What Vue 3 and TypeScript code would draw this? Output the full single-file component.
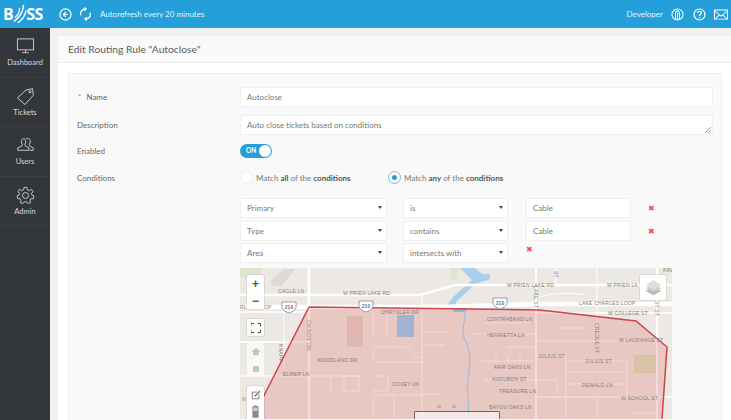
<script setup lang="ts">
type NavItem = { label: string; icon: string }
type Rule = { field: string; op: string; value?: string }
type MapLabel = { text: string; x: number; y: number; turn?: number }

const nav: NavItem[] = [
  { label: 'Dashboard', icon: 'monitor' },
  { label: 'Tickets', icon: 'tag' },
  { label: 'Users', icon: 'users' },
  { label: 'Admin', icon: 'gear' },
]

const rules: Rule[] = [
  { field: 'Primary', op: 'is', value: 'Cable' },
  { field: 'Type', op: 'contains', value: 'Cable' },
  { field: 'Area', op: 'intersects with' },
]

// streets drawn under the area polygon, [path, width]
const roads: [string, number][] = [
  ['M0 27H180L215 17H432', 2.5],
  ['M0 39H200L296 36H432', 4.5],
  ['M0 44H69', 1.5],
  ['M296 30Q320 22 345 27', 1],
  ['M296 45H432', 1.5],
  ['M69 0V151', 2.5],
  ['M296 0V151', 2],
  ['M357 0V70', 1],
  ['M417 0V151', 2],
  ['M316 0V17', 1],
  ['M44 45V100', 1],
  ['M0 74H69', 1.5],
  ['M133 45V68', 1],
  ['M147 45V68', 1],
  ['M182 25V151', 1],
  ['M182 64H207', 1],
  ['M182 77H205', 1],
  ['M0 108H125', 1],
  ['M104 108H119V123H104Z', 1],
  ['M91 108V125', 1],
  ['M133 108H148V123H133', 1],
  ['M182 126H200', 1],
  ['M137 79H165Q170 79 173 85Q176 90 182 90H182M137 79Q133 79 133 84V90Q133 94 140 94H182', 1],
  ['M133 150V135Q133 127 142 127H182', 1],
  ['M154 127V151', 1],
  ['M233 66H296', 1],
  ['M267 79H296', 1],
  ['M297 73H417', 1],
  ['M297 88H326', 1],
  ['M326 93H387', 1],
  ['M326 104H387', 1],
  ['M326 116H387', 1],
  ['M296 129H432', 1.5],
  ['M326 88V151', 1],
  ['M357 129V151', 1],
  ['M387 93V129', 1],
  ['M238 93H296', 1],
  ['M256 87V95', 1],
  ['M268 87V95', 1],
  ['M280 87V95', 1],
  ['M243 112H317V125', 1],
  ['M391 145H417', 1],
  ['M245 55H290', 1],
  ['M320 60H345', 1],
]

const labels: MapLabel[] = [
  { text: 'CAGLE LN', x: 38, y: 25 },
  { text: 'W PRIEN LAKE RD', x: 103, y: 27 },
  { text: 'RL', x: 0, y: 41 },
  { text: 'OP', x: 24, y: 41 },
  { text: 'N', x: 2, y: 133 },
  { text: 'CHRYSLER DR', x: 141, y: 46 },
  { text: 'WOODLAND DR', x: 77, y: 94 },
  { text: 'ELMER LN', x: 43, y: 108 },
  { text: 'COVEY LN', x: 152, y: 118 },
  { text: 'W PRIEN LAKE RD', x: 267, y: 19 },
  { text: 'W PRIEN LA', x: 367, y: 19 },
  { text: 'KRL', x: 423, y: 4 },
  { text: 'LAKE CHARLES LOOP', x: 339, y: 37 },
  { text: 'W COLLEGE ST', x: 368, y: 47 },
  { text: 'CONTRABAND LN', x: 247, y: 53 },
  { text: 'HENRIETTA LN', x: 247, y: 69 },
  { text: 'W LAGRANGE ST', x: 379, y: 74 },
  { text: 'JULIUS ST', x: 298, y: 90 },
  { text: 'JULIUS ST', x: 345, y: 95 },
  { text: 'FAIR OAKS LN', x: 254, y: 101 },
  { text: 'AUDUBON ST', x: 252, y: 113 },
  { text: 'DEWALD LN', x: 342, y: 119 },
  { text: 'TREASURE LN', x: 259, y: 125 },
  { text: 'W SCHOOL ST', x: 381, y: 132 },
  { text: 'BAYOU OAKS LN', x: 249, y: 141 },
  { text: 'NELSON RD', x: 71, y: 83, turn: -90 },
  { text: 'KNAPP', x: 39, y: 76, turn: 90 },
  { text: 'LAKE ST', x: 294, y: 18, turn: 90 },
  { text: 'CREOLE ST', x: 355, y: 55, turn: 90 },
  { text: 'ST ST', x: 415, y: 33, turn: 90 },
  { text: 'ST', x: 314, y: 3, turn: 90 },
  { text: 'S', x: 197, y: 137, turn: 90 },
  { text: 'S', x: 212, y: 137, turn: 90 },
]

const shields = [
  { x: 42, y: 34 },
  { x: 119, y: 33 },
  { x: 253, y: 30 },
]
</script>

<template>
  <div class="app">
    <header class="topbar">
      <div class="logo">
        <span>B</span>
        <svg class="logo-mark" viewBox="0 0 14 20" width="14" height="20" fill="none" stroke="#fff" stroke-linecap="round">
          <path d="M10.500 1.500C10 8 7 13 1.500 17" stroke-width="1.600" />
          <path d="M6.500 4.500C6.500 8 5 11 2.500 13" stroke-width="1.300" />
          <path d="M13 7C12 12 9 16 5 18.500" stroke-width="1.300" />
        </svg>
        <span>SS</span>
      </div>
      <svg class="bar-icon back" viewBox="0 0 14 14" width="13" height="13" fill="none" stroke="#fff" stroke-width="1.300">
        <circle cx="7" cy="7" r="6" />
        <path d="M7.500 4.200 4.700 7l2.800 2.800M5 7h4.600" />
      </svg>
      <svg class="bar-icon" viewBox="0 0 14 14" width="13" height="14" fill="none" stroke="#fff" stroke-width="1.400">
        <path d="M2 8.500A5.300 5.300 0 0 1 3.400 2.900 5 5 0 0 1 7 1.600" />
        <path d="M5.600 0 7.600 1.600 5.600 3.400" />
        <path d="M12 5.500A5.300 5.300 0 0 1 10.600 11.100 5 5 0 0 1 7 12.400" />
        <path d="M8.400 14 6.400 12.400 8.400 10.600" />
      </svg>
      <span class="refresh">Autorefresh every 20 minutes</span>
      <span class="spacer"></span>
      <span class="dev">Developer</span>
      <svg class="bar-icon user" viewBox="0 0 14 14" width="13" height="13" fill="none" stroke="#fff" stroke-width="1.100">
        <circle cx="7" cy="7" r="6" />
        <path d="M4.800 12.400V6.500C4.800 4 5.800 2.900 7 2.900S9.200 4 9.200 6.500V12.400M7 5V13" />
      </svg>
      <svg class="bar-icon help" viewBox="0 0 14 14" width="13" height="13" fill="none" stroke="#fff" stroke-width="1.300">
        <circle cx="7" cy="7" r="5.900" />
        <path d="M5 5.500C5 4.200 5.900 3.600 7 3.600S9 4.300 9 5.400C9 7 7 6.900 7 8.600M7 9.700V11" />
      </svg>
      <svg class="bar-icon mail" viewBox="0 0 14 11" width="14" height="11">
        <path fill="#fff" d="M0 .5H14V10.500H0ZM1 1.500 7 6.500 13 1.500ZM1 2.700V9.300L4.800 5.800ZM13 2.700 9.200 5.800 13 9.300ZM5.600 6.500 1.500 9.700H12.500L8.400 6.500 7 7.800Z" fill-rule="evenodd" />
      </svg>
    </header>

    <div class="main">
      <aside class="sidebar">
        <div v-for="item in nav" :key="item.label" class="nav-item">
          <svg v-if="item.icon === 'monitor'" viewBox="0 0 20 20" width="19" height="19" fill="none" stroke="#c9cbcd" stroke-width="1">
            <rect x="1.500" y="2" width="17" height="11.500" />
            <path d="M10 13.500V16M6.500 16.500H13.500" />
          </svg>
          <svg v-else-if="item.icon === 'tag'" viewBox="0 0 20 20" width="19" height="19" fill="none" stroke="#c9cbcd" stroke-width="1">
            <path d="M1.500 11.500 10.500 3.200 17.500 1.800 18.200 8.800 9.500 18.500Z" stroke-linejoin="round" />
            <circle cx="14.700" cy="5" r="1.200" />
          </svg>
          <svg v-else-if="item.icon === 'users'" viewBox="0 0 20 20" width="19" height="19" fill="none" stroke="#c9cbcd" stroke-width="1">
            <path d="M6.500 8.700C5 6.300 5.500 2.800 8 2.800S11 6.300 9.500 8.700V10.300L13.700 12.500V15H1.800V12.500L6.500 10.300Z" />
            <path d="M10.500 3C11.200 2.300 14.800 2 15 5.200 15.100 6.700 14.600 7.800 14 8.700V10.300L18.200 12.500V15H14.500" />
          </svg>
          <svg v-else viewBox="0 0 20 20" width="19" height="19" fill="none" stroke="#c9cbcd" stroke-width="1">
            <circle cx="10" cy="10" r="3.200" />
            <path d="M8.500 1.500H11.500L12 4 14.200 4.900 16.300 3.500 18 6 16.300 7.700 16.700 9.500 18.800 10.500 18 13.500 15.800 13.300 14.600 15.200 15.500 17.300 12.800 18.500 11.400 16.700H8.600L7.200 18.500 4.500 17.300 5.400 15.200 4.200 13.300 2 13.500 1.200 10.500 3.300 9.500 3.700 7.700 2 6 3.700 3.500 5.800 4.900 8 4Z" stroke-linejoin="round" />
          </svg>
          <span>{{ item.label }}</span>
        </div>
      </aside>

      <main class="content">
        <section class="panel">
          <h1 class="panel-head">Edit Routing Rule "Autoclose"</h1>
          <div class="panel-body">
            <form class="form" @submit.prevent>
              <div class="row">
                <label><i>*</i>Name</label>
                <div class="control"><div class="field">Autoclose</div></div>
              </div>
              <div class="row">
                <label>Description</label>
                <div class="control">
                  <div class="field">
                    Auto close tickets based on conditions
                    <svg class="grip" viewBox="0 0 6 6" width="6" height="6" fill="none" stroke="#888" stroke-width=".8"><path d="M0 6 6 0M3 6 6 3" /></svg>
                  </div>
                </div>
              </div>
              <div class="row enabled">
                <label>Enabled</label>
                <div class="control">
                  <div class="toggle"><span>ON</span><b></b></div>
                </div>
              </div>
              <div class="row match">
                <label>Conditions</label>
                <div class="control radios">
                  <div class="radio">
                    <span class="dot"></span>
                    <span>Match <b>all</b> of the <b>conditions</b></span>
                  </div>
                  <div class="radio on">
                    <span class="dot"></span>
                    <span>Match <b>any</b> of the <b>conditions</b></span>
                  </div>
                </div>
              </div>

              <div class="rules">
                <div v-for="rule in rules" :key="rule.field" class="rule">
                  <div class="field select first">{{ rule.field }}</div>
                  <div class="field select second">{{ rule.op }}</div>
                  <template v-if="rule.value">
                    <div class="field third">{{ rule.value }}</div>
                    <span class="remove">✖</span>
                  </template>
                  <span v-else class="remove inline">✖</span>
                </div>
              </div>

              <div class="map">
                <svg class="map-art" viewBox="0 0 432 151" width="432" height="151">
                  <rect width="432" height="151" fill="#ece9e4" />
                  <path d="M0 0H22V6L16 9H0Z" fill="#dfe6cf" />
                  <path d="M210 0H220L216 12H210Z" fill="#dfe6cf" />
                  <path d="M30 14 44 1H55L42 18H34Z" fill="#dedad3" />
                  <path d="M220 0H235L242 6H250V11L235 16 216 34V39H206L214 28 232 12Z" fill="#a9d0ea" />
                  <path v-for="road in roads" :key="road[0]" :d="road[0]" fill="none" stroke="#fff" :stroke-width="road[1]" />
                  <path d="M69 39 300 42 396 53 427 79 422 151H12Z" fill="#d9615e" fill-opacity=".24" />
                  <rect x="107" y="48" width="16" height="31" fill="#cf8f85" fill-opacity=".3" />
                  <rect x="157" y="47" width="17" height="22" fill="#a3b4d3" />
                  <rect x="394" y="87" width="22" height="18" fill="#d9c3a6" />
                  <path d="M213 42H226" stroke="#9db1d0" stroke-width="4" />
                  <path d="M224 42C228 50 220 58 224 70 232 84 230 96 228 110 226 124 230 138 228 151" fill="none" stroke="#a8bcd8" stroke-width="1.300" />
                  <path d="M69 39 300 42 396 53 427 79 422 151M69 39 12 151" fill="none" stroke="#cf434c" stroke-width="1.500" />
                  <g v-for="shield in shields" :key="shield.x">
                    <path :d="`M${shield.x} ${shield.y}h14v6q-2 4-7 5-5-1-7-5Z`" fill="#fff" stroke="#7a88a4" stroke-width=".8" />
                    <text :x="shield.x + 7" :y="shield.y + 7" text-anchor="middle" class="shield">210</text>
                  </g>
                  <text
                    v-for="label in labels"
                    :key="label.text + label.x"
                    :x="label.x"
                    :y="label.y"
                    class="map-label"
                    :transform="label.turn ? `rotate(${label.turn} ${label.x} ${label.y})` : undefined"
                  >{{ label.text }}</text>
                </svg>
                <div class="tools">
                  <div class="tool-group">
                    <button type="button" class="tool glyph">+</button>
                    <button type="button" class="tool glyph">−</button>
                  </div>
                  <div class="tool-group full">
                    <button type="button" class="tool">
                      <svg viewBox="0 0 12 12" width="10" height="10" fill="none" stroke="#555" stroke-width="1.200"><path d="M0 4V.6H4M8 .6H11.400V4M0 8V11.400H4M8 11.400H11.400V8" /></svg>
                    </button>
                  </div>
                  <div class="tool-group muted">
                    <button type="button" class="tool">
                      <svg viewBox="0 0 10 10" width="8" height="8" fill="#c4c4c4"><path d="M5 0 9.500 3.200 8 9H2L.5 3.200Z" /></svg>
                    </button>
                    <button type="button" class="tool">
                      <svg viewBox="0 0 10 10" width="6" height="6" fill="#c4c4c4"><rect width="10" height="10" /></svg>
                    </button>
                  </div>
                  <div class="tool-group draw">
                    <button type="button" class="tool">
                      <svg viewBox="0 0 12 12" width="10" height="10" fill="none" stroke="#666" stroke-width="1"><path d="M7 2.500H1.500V10.500H9.500V5.500" /><path d="M4.500 7.500 10.500 1.500" stroke-width="1.500" /></svg>
                    </button>
                    <button type="button" class="tool">
                      <svg viewBox="0 0 8 14" width="7" height="13"><path d="M2.500 0H5.500V1H7.500V14H.5V1H2.500Z" fill="#888" /><rect x="1.500" y="2.500" width="5" height="4" fill="#ccc" /></svg>
                    </button>
                  </div>
                </div>
                <button type="button" class="layers">
                  <svg viewBox="0 0 20 20" width="17" height="17">
                    <path d="M10 9 19 14 10 19 1 14Z" fill="#b8b8b8" />
                    <path d="M10 6 19 11 10 16 1 11Z" fill="#cccccc" />
                    <path d="M10 1 19 7 10 13 1 7Z" fill="#dedede" />
                  </svg>
                </button>
                <div class="map-popup"></div>
              </div>
            </form>
          </div>
        </section>
      </main>
    </div>
  </div>
</template>

<style>
html, body { margin: 0; overflow: hidden; background: #f0f1f2; }
</style>

<style scoped>
.app {
  width: 731px;
  height: 420px;
  overflow: hidden;
  font-family: Lato, "Liberation Sans", sans-serif;
  color: #666;
  font-size: 8px;
  display: flex;
  flex-direction: column;
}
.topbar {
  height: 28px;
  flex: none;
  background: #249fda;
  display: flex;
  align-items: center;
  padding: 0 3px 0 3px;
  color: #e6f4fb;
}
.logo {
  width: 56px;
  display: flex;
  align-items: center;
  color: #fff;
  font-weight: 700;
  font-size: 16px;
  letter-spacing: -.5px;
  font-family: "Open Sans", "Liberation Sans", sans-serif;
}
.logo-mark { margin: 0 -1px 0 0; }
.bar-icon { flex: none; margin-left: 7px; }
.bar-icon.back { margin-left: 0; }
.refresh { margin-left: 8px; font-size: 8px; }
.spacer { flex: 1; }
.user { margin-left: 8px; }
.help { margin-left: 9px; }
.mail { margin-left: 8px; }
.main { flex: 1; display: flex; min-height: 0; }
.sidebar {
  width: 50px;
  flex: none;
  background: #33373c;
}
.nav-item {
  height: 49.500px;
  box-sizing: border-box;
  padding-top: 9px;
  display: flex;
  flex-direction: column;
  align-items: center;
  border-bottom: 1px solid #3b3f44;
  color: #d8dadc;
  font-size: 7.500px;
  gap: 2px;
}
.content { flex: 1; padding: 7px 0 0 8px; min-width: 0; }
.panel { background: #fff; height: 100%; border-top: 1px solid #ececec; }
.panel-head {
  margin: 0;
  height: 27px;
  box-sizing: border-box;
  padding: 7px 0 0 10px;
  background: #fafafa;
  border-bottom: 1px solid #ececec;
  font-size: 10.300px;
  font-weight: 400;
  color: #5c5c5c;
  line-height: 13px;
}
.panel-body { padding: 10px 9px 0 10px; }
.form {
  background: #f9f9f9;
  border: 1px solid #f0f0f0;
  padding: 13px 8px 0 8px;
  height: 360px;
  box-sizing: border-box;
}
.row { display: flex; margin-bottom: 8px; align-items: center; }
label {
  width: 163px;
  flex: none;
  font-size: 8px;
  color: #666;
}
label i { color: #e66; font-style: normal; margin-right: 5px; margin-left: 1px; }
.control { flex: 1; min-width: 0; }
.field {
  position: relative;
  box-sizing: border-box;
  height: 20px;
  line-height: 18px;
  background: #fff;
  border: 1px solid #f0f0f0;
  padding: 0 6px;
  font-size: 8px;
  color: #777;
}
.grip { position: absolute; right: 1px; bottom: 1px; }
.enabled { margin: 9px 0 0; }
.toggle {
  position: relative;
  width: 32px;
  height: 14px;
  border-radius: 7px;
  background: #249fda;
  color: #fff;
  font-size: 6.500px;
  font-weight: 700;
  line-height: 14px;
  padding-left: 6px;
  box-sizing: border-box;
}
.toggle b {
  position: absolute;
  right: 1px;
  top: 1px;
  width: 12px;
  height: 12px;
  border-radius: 50%;
  background: #fff;
}
.match { margin: 13px 0 0; }
.radios { display: flex; }
.radio { display: flex; align-items: center; gap: 3px; color: #777; font-size: 8px; width: 148px; }
.radio b { color: #555; font-weight: 700; }
.dot {
  width: 13px;
  height: 13px;
  box-sizing: border-box;
  border: 1px solid #eee;
  border-radius: 50%;
  background: #fff;
  display: flex;
  align-items: center;
  justify-content: center;
}
.radio.on .dot { border-color: #6cc0e8; }
.radio.on .dot::after {
  content: "";
  width: 5px;
  height: 5px;
  border-radius: 50%;
  background: #249fda;
}
.rules { margin: 14px 0 0 163px; display: grid; gap: 2.500px; }
.rule { display: flex; align-items: center; height: 20px; }
.first { width: 147px; margin-right: 16px; }
.second { width: 105px; margin-right: 18px; }
.third { width: 105px; }
.select::after {
  content: "";
  position: absolute;
  right: 4px;
  top: 7px;
  border: 2.500px solid transparent;
  border-top: 3.500px solid #444;
  border-bottom: 0;
}
.remove { color: #ec5353; font-size: 8px; margin-left: 17px; line-height: 10px; }
.remove.inline { margin: -8px 0 0 0; }
.map {
  position: relative;
  margin: 5px 0 0 163px;
  width: 432px;
  height: 151px;
  overflow: hidden;
}
.map-art { display: block; }
.map-label {
  font-family: "Liberation Sans", sans-serif;
  font-size: 5px;
  fill: #857c7b;
  letter-spacing: .2px;
}
.shield {
  font-family: "Liberation Sans", sans-serif;
  font-size: 5px;
  font-weight: 700;
  fill: #66748f;
}
.tools {
  position: absolute;
  left: 7px;
  top: 7px;
  display: flex;
  flex-direction: column;
}
.tool-group {
  width: 17px;
  background: #fff;
  border-radius: 2px;
  box-shadow: 0 0 0 1px rgba(0,0,0,.07);
}
.full { margin-top: 10px; }
.tool-group.muted { margin-top: 7px; box-shadow: none; background: #f8f8f8; }
.draw { margin-top: 9px; }
.tool {
  display: flex;
  align-items: center;
  justify-content: center;
  width: 17px;
  height: 17px;
  padding: 0;
  border: 0;
  background: transparent;
}
.glyph {
  font-family: "Liberation Sans", sans-serif;
  font-size: 12px;
  font-weight: 700;
  color: #555;
}
.layers {
  position: absolute;
  right: 6px;
  top: 7px;
  width: 26px;
  height: 25px;
  background: #fff;
  border: 0;
  border-radius: 2px;
  box-shadow: 0 0 0 1px rgba(0,0,0,.07);
  display: flex;
  align-items: center;
  justify-content: center;
  padding: 0;
}
.map-popup {
  position: absolute;
  left: 174px;
  top: 143px;
  width: 84px;
  height: 20px;
  background: rgba(255,255,255,.6);
  border: 1px solid #666;
  border-radius: 1px;
}
</style>
